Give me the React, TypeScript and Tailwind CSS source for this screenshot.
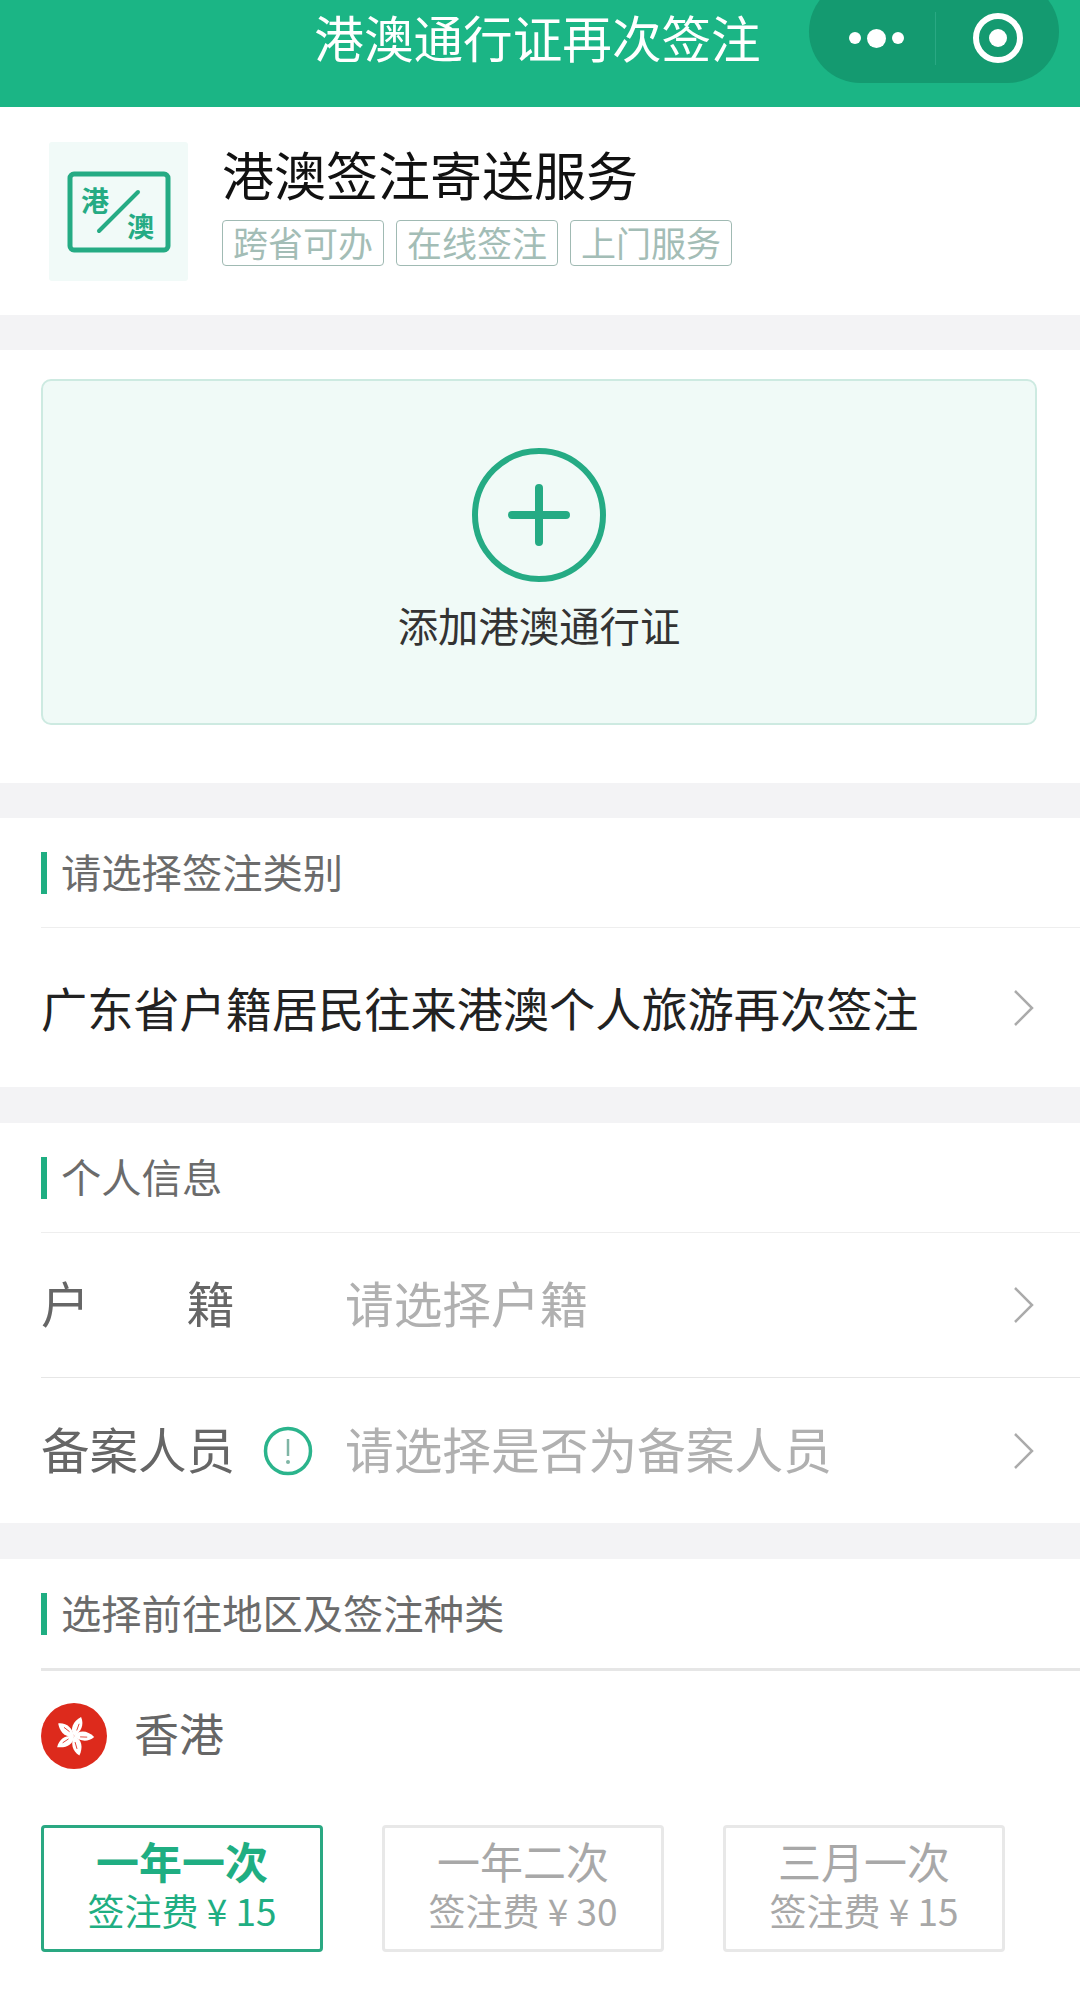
const font = { fontFamily: '"Noto Sans CJK SC", sans-serif' };

function Chevron() {
  return (
    <svg width="24" height="40" viewBox="0 0 24 40" fill="none" className="shrink-0">
      <path d="M5 3 L22 20 L5 37" stroke="#ababab" strokeWidth="2.5" />
    </svg>
  );
}

function SectionTitle({ children, thick }: { children: string; thick?: boolean }) {
  return (
    <div className={`ml-[41px] flex items-center ${thick ? 'border-b-[3px] border-[#e6e6e6] h-[112px]' : 'border-b border-[#eeeeee] h-[110px]'}`}>
      <div className="w-[6px] h-[42px] bg-[#1fae82]" />
      <div className="ml-[14px] mb-[2px] text-[40.3px] leading-none text-[#6b6b6b]">{children}</div>
    </div>
  );
}

function Gap() {
  return <div className="h-[36px] bg-[#f3f3f5]" />;
}

function FormRow({ label, placeholder, info, border }: { label: React.ReactNode; placeholder: string; info?: boolean; border?: boolean }) {
  return (
    <div className={`ml-[41px] h-[145px] pr-[46px] flex items-center ${border ? 'border-b border-[#e6e6e6]' : ''}`}>
      <div className="w-[194px] mb-[5px] text-[48.5px] leading-none text-[#666666] shrink-0">{label}</div>
      <div className="w-[110px] shrink-0 pl-[28px]">
        {info && (
          <svg width="50" height="50" viewBox="0 0 50 50" fill="none">
            <circle cx="25" cy="25" r="22.5" stroke="#2bb48c" strokeWidth="3.5" />
            <path d="M25 13 V30" stroke="#7fb5a5" strokeWidth="2.5" />
            <circle cx="25" cy="36" r="2" fill="#7fb5a5" />
          </svg>
        )}
      </div>
      <div className="flex-1 mb-[5px] text-[48.7px] leading-none text-[#b0b0b0]">{placeholder}</div>
      <Chevron />
    </div>
  );
}

function VisaOption({ title, fee, active }: { title: string; fee: string; active?: boolean }) {
  return (
    <div
      className={`w-[282px] h-[127px] pb-[7px] rounded-[4px] flex flex-col items-center justify-center ${
        active ? 'border-[3px] border-[#2aa882] text-[#1fae82]' : 'border-[3px] border-[#e8e8e8] text-[#a8a8a8]'
      }`}
    >
      <div className={`text-[43px] leading-[50px] ${active ? 'font-bold' : ''}`}>{title}</div>
      <div className="text-[37px] leading-[50px]">{fee}</div>
    </div>
  );
}

function HkFlag() {
  return (
    <svg width="66" height="66" viewBox="0 0 66 66" className="shrink-0">
      <circle cx="33" cy="33" r="33" fill="#dd2a1c" />
      {[0, 72, 144, 216, 288].map((a) => (
        <g key={a} transform={`rotate(${a + 12} 33 33)`}>
          <path d="M33 33 C27 27 29 19 36 13 C41 20 39 28 33 33 Z" fill="#ffffff" />
          <path d="M34.5 27 L35.5 20" stroke="#dd2a1c" strokeWidth="0.8" />
        </g>
      ))}
    </svg>
  );
}

export default function App() {
  return (
    <div className="w-[1080px] h-[2011px] bg-white overflow-hidden" style={font}>
      <header className="h-[107px] bg-[#1bb585] relative flex justify-center pt-[8px] pr-[5px]">
        <h1 className="text-[49.6px] leading-[56px] font-normal text-white">港澳通行证再次签注</h1>
        <div className="absolute right-[21px] -top-[20px] w-[250px] h-[103px] rounded-full bg-[#149a70] flex items-center">
          <div className="w-[126px] pl-[8px] flex items-center justify-center gap-[6px] pt-[13px]">
            <span className="w-[12px] h-[12px] rounded-full bg-white" />
            <span className="w-[19px] h-[19px] rounded-full bg-white" />
            <span className="w-[12px] h-[12px] rounded-full bg-white" />
          </div>
          <div className="w-px h-[53px] bg-[#2aa883] mt-[13px]" />
          <div className="flex-1 flex justify-center pt-[13px]">
            <div className="w-[50px] h-[50px] rounded-full border-[6px] border-white flex items-center justify-center">
              <span className="w-[18px] h-[18px] rounded-full bg-white" />
            </div>
          </div>
        </div>
      </header>

      <section className="h-[208px] pl-[49px] pt-[35px] flex gap-[34px]">
        <div className="w-[139px] h-[139px] bg-[#f1faf8] rounded-[3px] flex items-center justify-center">
          <svg width="104" height="82" viewBox="0 0 104 82" fill="none">
            <rect x="3" y="3" width="98" height="76" rx="4" stroke="#25ab84" strokeWidth="5" />
            <path d="M32 60 L71 21" stroke="#25ab84" strokeWidth="4" strokeLinecap="round" />
            <text x="14" y="41" fontSize="28" fontWeight="700" fill="#25ab84">港</text>
            <text x="60" y="66" fontSize="27" fontWeight="700" fill="#25ab84">澳</text>
          </svg>
        </div>
        <div>
          <div className="text-[52px] leading-[60px] text-[#111111] mt-[2px]">港澳签注寄送服务</div>
          <div className="flex gap-[12px] mt-[16px]">
            {['跨省可办', '在线签注', '上门服务'].map((t) => (
              <span key={t} className="w-[162px] h-[46px] pb-[3px] border-[1.5px] border-[#a0bab3] rounded-[4px] flex items-center justify-center text-[35px] leading-none text-[#a3bdb6]">
                {t}
              </span>
            ))}
          </div>
        </div>
      </section>
      <div className="h-[35px] bg-[#f3f3f5]" />

      <section className="h-[433px] px-[41px] pt-[29px]">
        <div className="w-[996px] h-[346px] bg-[#f0faf7] border-2 border-[#cdeae1] rounded-[10px] flex flex-col items-center pt-[67px]">
          <svg width="134" height="134" viewBox="0 0 134 134" fill="none">
            <circle cx="67" cy="67" r="64" stroke="#25ab84" strokeWidth="6" />
            <path d="M67 40 V94 M40 67 H94" stroke="#25ab84" strokeWidth="8" strokeLinecap="round" />
          </svg>
          <div className="mt-[19px] text-[40.4px] leading-[48px] text-[#333333]">添加港澳通行证</div>
        </div>
      </section>
      <div className="h-[35px] bg-[#f3f3f5]" />

      <section>
        <SectionTitle>请选择签注类别</SectionTitle>
        <div className="ml-[41px] h-[159px] pr-[46px] flex items-center justify-between">
          <div className="text-[46.2px] leading-none text-[#222222]">广东省户籍居民往来港澳个人旅游再次签注</div>
          <Chevron />
        </div>
      </section>
      <Gap />

      <section>
        <SectionTitle>个人信息</SectionTitle>
        <FormRow
          border
          placeholder="请选择户籍"
          label={
            <div className="flex justify-between">
              <span>户</span>
              <span>籍</span>
            </div>
          }
        />
        <FormRow label="备案人员" placeholder="请选择是否为备案人员" info />
      </section>
      <Gap />

      <section>
        <SectionTitle thick>选择前往地区及签注种类</SectionTitle>
        <div className="h-[129px] pl-[41px] flex items-center gap-[27px]">
          <HkFlag />
          <div className="mb-[6px] text-[45px] leading-none text-[#666666]">香港</div>
        </div>
        <div className="pl-[41px] pt-[25px] flex gap-[59px]">
          <VisaOption active title="一年一次" fee="签注费 ¥ 15" />
          <VisaOption title="一年二次" fee="签注费 ¥ 30" />
          <VisaOption title="三月一次" fee="签注费 ¥ 15" />
        </div>
      </section>
    </div>
  );
}
